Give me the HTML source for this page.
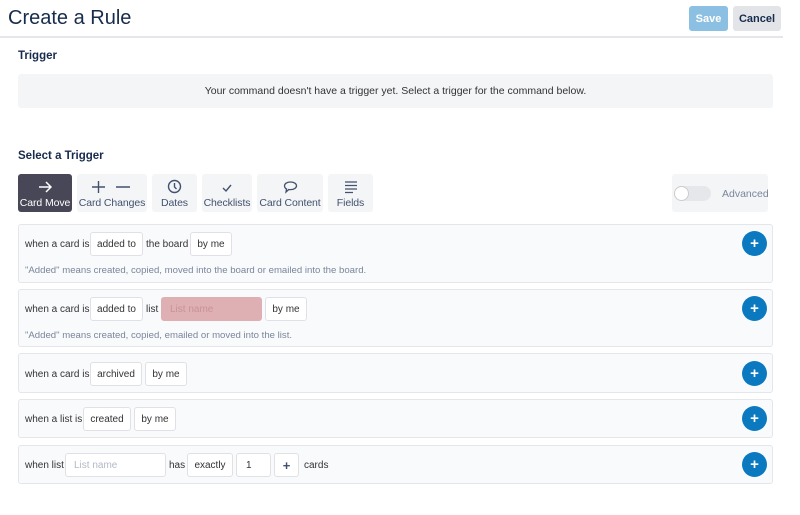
<!DOCTYPE html>
<html><head><style>
*{box-sizing:border-box;margin:0;padding:0}
body{width:800px;height:515px;background:#fff;font-family:"Liberation Sans",sans-serif;color:#172b4d;position:relative;overflow:hidden;white-space:nowrap}
.a{position:absolute}
.btn{position:absolute;border-radius:3px;font-size:11px;font-weight:bold;display:flex;align-items:center;justify-content:center}
.tb{position:absolute;top:174px;height:38px;background:#f4f5f7;border-radius:3px;color:#42526e;text-align:center}
.tb .ic{height:20px;display:flex;align-items:flex-end;justify-content:center}
.tb .lb{margin-top:3px;font-size:10.5px;letter-spacing:-0.1px}
.row{position:absolute;left:18px;width:755px;background:#f9fafc;border:1px solid #e4e6ea;border-radius:3px}
.t{position:absolute;font-size:10px;color:#333;margin-top:1px}
.box{position:absolute;background:#fff;border:1px solid #dfe1e6;border-radius:3px;height:24px;font-size:10px;color:#333;display:flex;align-items:center;justify-content:center}
.note{position:absolute;font-size:9.6px;color:#7a869a}
.plus{position:absolute;left:742px;width:25px;height:25px;border-radius:50%;background:#0b79bf;color:#fff;font-weight:bold;font-size:15px;display:flex;align-items:center;justify-content:center}
</style></head><body>
<div class="a" style="left:8px;top:7px;font-size:20px;color:#172b4d">Create a Rule</div>
<div class="a" style="left:0;top:36px;width:783px;height:2px;background:#e4e6ea"></div>
<div class="btn" style="left:689px;top:6px;width:39px;height:25px;background:#8cc0e2;color:#fff">Save</div>
<div class="btn" style="left:733px;top:6px;width:48px;height:25px;background:#e2e4e8;color:#172b4d">Cancel</div>
<div class="a" style="left:18px;top:50px;font-size:11.5px;font-weight:bold">Trigger</div>
<div class="a" style="left:18px;top:74px;width:755px;height:34px;background:#f4f5f7;border-radius:3px;font-size:10.5px;color:#333;text-align:center;line-height:34px">Your command doesn't have a trigger yet. Select a trigger for the command below.</div>
<div class="a" style="left:18px;top:150px;font-size:11.5px;font-weight:bold">Select a Trigger</div>

<div class="tb" style="left:18px;width:54px;background:#474757;color:#fff"><div class="ic"><svg width="14" height="14" viewBox="0 0 14 14" fill="none" stroke="#fff" stroke-width="1.5"><path d="M1 7h12M8 2l5 5-5 5"/></svg></div><div class="lb">Card Move</div></div>
<div class="tb" style="left:77px;width:70px"><div class="ic"><svg width="44" height="14" viewBox="0 0 44 14" fill="none" stroke="#42526e" stroke-width="1.4"><path d="M2 7h13M8.5 1v12M26 7h14"/></svg></div><div class="lb">Card Changes</div></div>
<div class="tb" style="left:152px;width:45px"><div class="ic"><svg width="15" height="15" viewBox="0 0 15 15" fill="none" stroke="#42526e" stroke-width="1.4"><circle cx="7.5" cy="7.5" r="6"/><path d="M7.5 4v4l2 2"/></svg></div><div class="lb">Dates</div></div>
<div class="tb" style="left:202px;width:50px"><div class="ic"><svg width="12" height="12" viewBox="0 0 12 12" fill="none" stroke="#42526e" stroke-width="1.4"><path d="M2 6l3 3 5-6"/></svg></div><div class="lb">Checklists</div></div>
<div class="tb" style="left:257px;width:66px"><div class="ic"><svg width="15" height="14" viewBox="0 0 15 14" fill="none" stroke="#42526e" stroke-width="1.3"><path d="M7.5 2c3.3 0 6 1.6 6 3.8s-2.7 3.8-6 3.8c-.6 0-1.2 0-1.7-.1L3 12l.5-3C2.2 8.3 1.5 7.1 1.5 5.8 1.5 3.6 4.2 2 7.5 2z"/></svg></div><div class="lb">Card Content</div></div>
<div class="tb" style="left:328px;width:45px"><div class="ic"><svg width="14" height="14" viewBox="0 0 14 14" fill="none" stroke="#42526e" stroke-width="1.3"><path d="M1 2h12M1 5.5h12M1 9h12M1 12.5h8"/></svg></div><div class="lb">Fields</div></div>
<div class="a" style="left:672px;top:174px;width:96px;height:38px;background:#f4f5f7;border-radius:3px"></div>
<div class="a" style="left:674px;top:186px;width:37px;height:15px;border-radius:8px;background:#e6e7ea"></div>
<div class="a" style="left:674px;top:186px;width:15px;height:15px;border-radius:50%;background:#fff;border:1px solid #ccc"></div>
<div class="a" style="left:722px;top:188px;font-size:10.5px;color:#7a869a">Advanced</div>

<div class="row" style="top:224px;height:59px"></div>
<div class="t" style="left:25px;top:238px">when a card is</div>
<div class="box" style="left:90px;top:232px;width:53px">added to</div>
<div class="t" style="left:146px;top:238px">the board</div>
<div class="box" style="left:190px;top:232px;width:42px">by me</div>
<div class="note" style="left:25px;top:265px">"Added" means created, copied, moved into the board or emailed into the board.</div>
<div class="plus" style="top:231px">+</div>

<div class="row" style="top:289px;height:58px"></div>
<div class="t" style="left:25px;top:303px">when a card is</div>
<div class="box" style="left:90px;top:297px;width:53px">added to</div>
<div class="t" style="left:146px;top:303px">list</div>
<div class="box" style="left:161px;top:297px;width:101px;background:#dfb0b3;border-color:#dfb0b3;color:#c79296;justify-content:flex-start;padding-left:8px">List name</div>
<div class="box" style="left:265px;top:297px;width:42px">by me</div>
<div class="note" style="left:25px;top:330px">"Added" means created, copied, emailed or moved into the list.</div>
<div class="plus" style="top:296px">+</div>

<div class="row" style="top:353px;height:40px"></div>
<div class="t" style="left:25px;top:368px">when a card is</div>
<div class="box" style="left:90px;top:362px;width:52px">archived</div>
<div class="box" style="left:145px;top:362px;width:42px">by me</div>
<div class="plus" style="top:361px">+</div>

<div class="row" style="top:399px;height:39px"></div>
<div class="t" style="left:25px;top:413px">when a list is</div>
<div class="box" style="left:83px;top:407px;width:48px">created</div>
<div class="box" style="left:134px;top:407px;width:42px">by me</div>
<div class="plus" style="top:406px">+</div>

<div class="row" style="top:445px;height:39px"></div>
<div class="t" style="left:25px;top:459px">when list</div>
<div class="box" style="left:65px;top:453px;width:101px;color:#b3b9c4;justify-content:flex-start;padding-left:8px">List name</div>
<div class="t" style="left:169px;top:459px">has</div>
<div class="box" style="left:187px;top:453px;width:46px">exactly</div>
<div class="box" style="left:236px;top:453px;width:35px;justify-content:flex-start;padding-left:9px">1</div>
<div class="box" style="left:274px;top:453px;width:25px;font-weight:bold;font-size:13px;color:#42526e">+</div>
<div class="t" style="left:304px;top:459px">cards</div>
<div class="plus" style="top:452px">+</div>
</body></html>
